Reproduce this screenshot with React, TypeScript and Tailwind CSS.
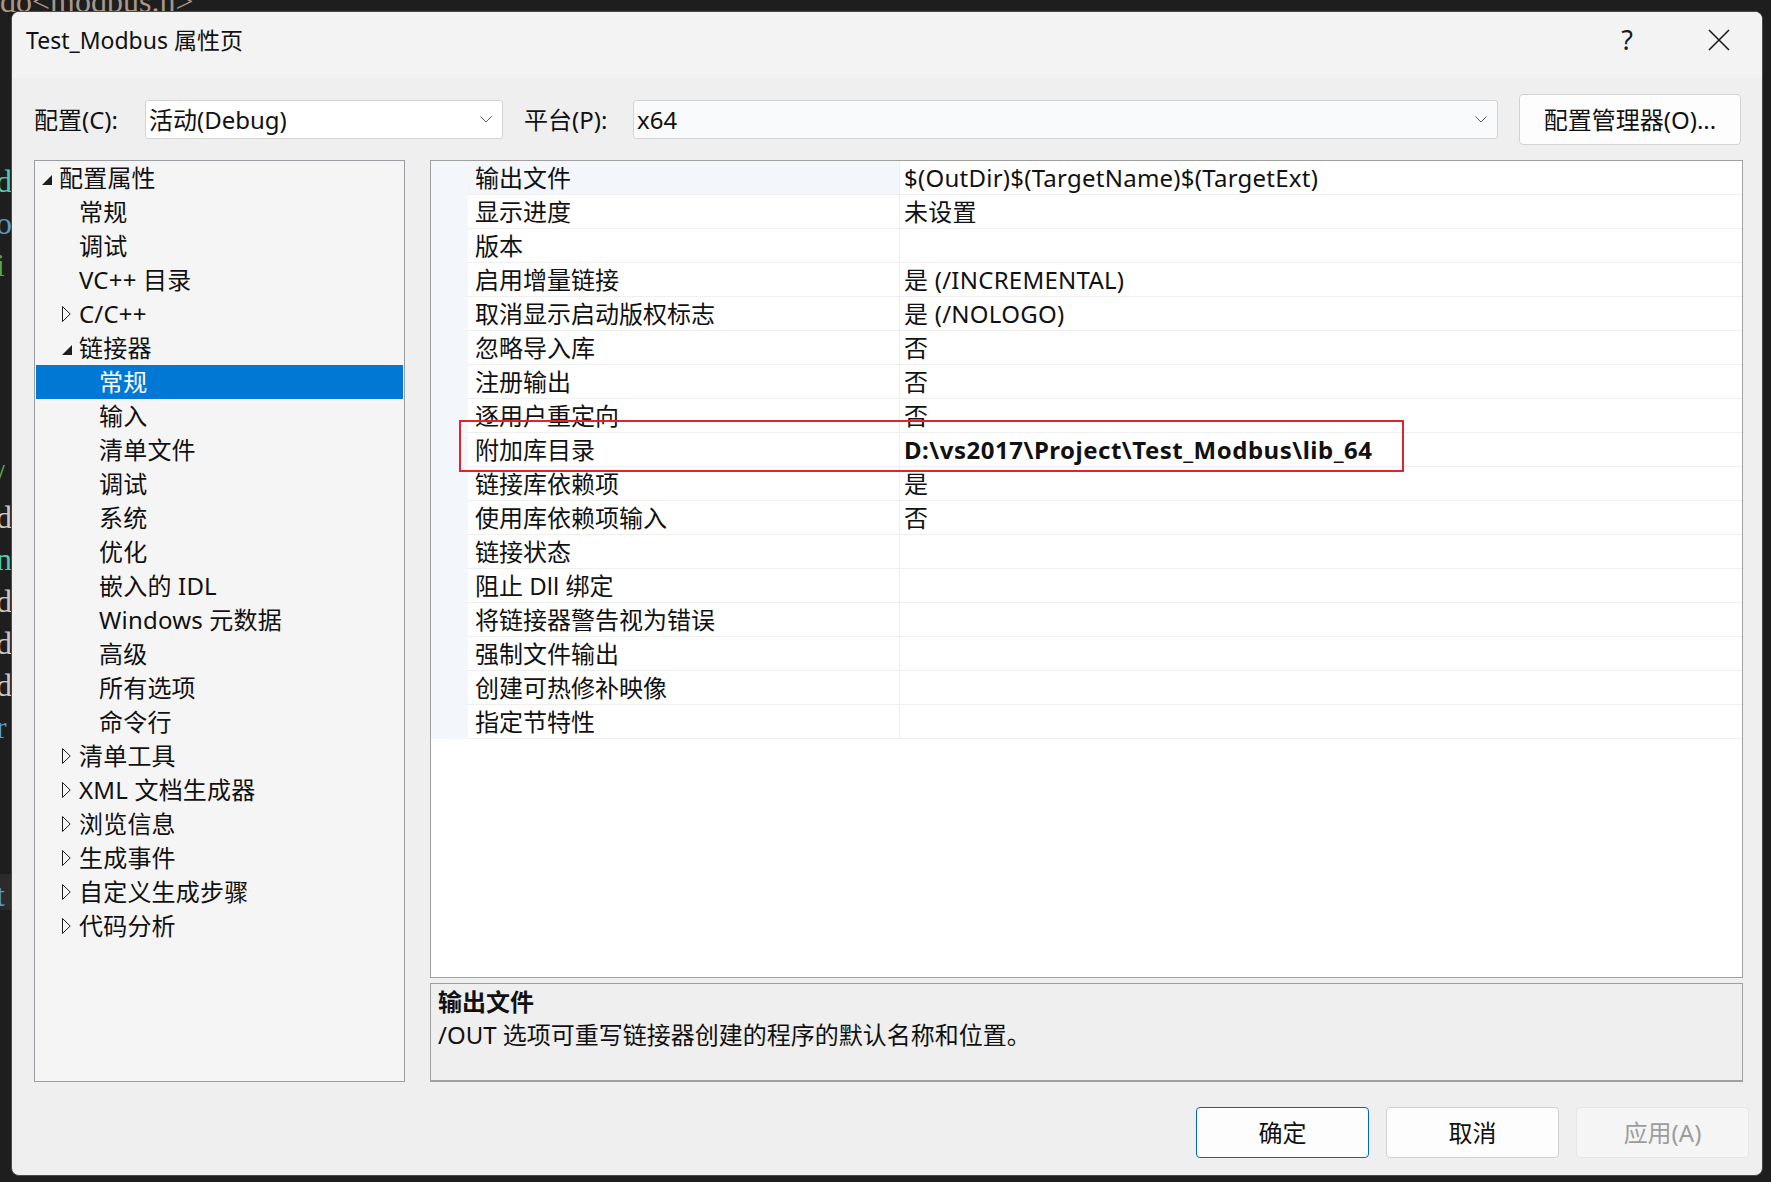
import { ReactNode } from 'react'

const codeChars = [
  { top: 160, ch: 'd', color: 'text-[#4ec9b0]' },
  { top: 202, ch: 'o', color: 'text-[#569cd6]' },
  { top: 244, ch: 'i', color: 'text-[#57a64a]' },
  { top: 454, ch: '/', color: 'text-[#57a64a]' },
  { top: 496, ch: 'd', color: 'text-[#c8c8c8]' },
  { top: 538, ch: 'n', color: 'text-[#4ec9b0]' },
  { top: 580, ch: 'd', color: 'text-[#c8c8c8]' },
  { top: 622, ch: 'd', color: 'text-[#c8c8c8]' },
  { top: 664, ch: 'd', color: 'text-[#c8c8c8]' },
  { top: 706, ch: 'r', color: 'text-[#569cd6]' },
  { top: 874, ch: 't', color: 'text-[#569cd6]' },
]

type TreeItem = { label: string; level: number; state?: 'open' | 'closed'; selected?: boolean }

const treeItems: TreeItem[] = [
  { label: '配置属性', level: 0, state: 'open' },
  { label: '常规', level: 1 },
  { label: '调试', level: 1 },
  { label: 'VC++ 目录', level: 1 },
  { label: 'C/C++', level: 1, state: 'closed' },
  { label: '链接器', level: 1, state: 'open' },
  { label: '常规', level: 2, selected: true },
  { label: '输入', level: 2 },
  { label: '清单文件', level: 2 },
  { label: '调试', level: 2 },
  { label: '系统', level: 2 },
  { label: '优化', level: 2 },
  { label: '嵌入的 IDL', level: 2 },
  { label: 'Windows 元数据', level: 2 },
  { label: '高级', level: 2 },
  { label: '所有选项', level: 2 },
  { label: '命令行', level: 2 },
  { label: '清单工具', level: 1, state: 'closed' },
  { label: 'XML 文档生成器', level: 1, state: 'closed' },
  { label: '浏览信息', level: 1, state: 'closed' },
  { label: '生成事件', level: 1, state: 'closed' },
  { label: '自定义生成步骤', level: 1, state: 'closed' },
  { label: '代码分析', level: 1, state: 'closed' },
]

const props: { name: string; value: string; bold?: boolean }[] = [
  { name: '输出文件', value: '$(OutDir)$(TargetName)$(TargetExt)' },
  { name: '显示进度', value: '未设置' },
  { name: '版本', value: '' },
  { name: '启用增量链接', value: '是 (/INCREMENTAL)' },
  { name: '取消显示启动版权标志', value: '是 (/NOLOGO)' },
  { name: '忽略导入库', value: '否' },
  { name: '注册输出', value: '否' },
  { name: '逐用户重定向', value: '否' },
  { name: '附加库目录', value: 'D:\\vs2017\\Project\\Test_Modbus\\lib_64', bold: true },
  { name: '链接库依赖项', value: '是' },
  { name: '使用库依赖项输入', value: '否' },
  { name: '链接状态', value: '' },
  { name: '阻止 Dll 绑定', value: '' },
  { name: '将链接器警告视为错误', value: '' },
  { name: '强制文件输出', value: '' },
  { name: '创建可热修补映像', value: '' },
  { name: '指定节特性', value: '' },
]

function Chevron() {
  return (
    <svg width="12" height="7" viewBox="0 0 12 7" className="shrink-0">
      <path d="M0.5 0.5 L6 6 L11.5 0.5" fill="none" stroke="#5f5f5f" strokeWidth="1" />
    </svg>
  )
}

function Dropdown({ value, width, bg }: { value: string; width: string; bg: string }) {
  return (
    <div className={`flex items-center justify-between h-[39px] pl-[3px] pr-[10px] border border-[#d3d3d3] rounded-[3px] ${width} ${bg}`}>
      <span>{value}</span>
      <Chevron />
    </div>
  )
}

function Twisty({ state }: { state?: 'open' | 'closed' }) {
  if (state === 'open') {
    return (
      <svg width="10" height="10" viewBox="0 0 10 10" className="mt-[4px]">
        <polygon points="10,0 10,10 0,10" fill="#1e1e1e" />
      </svg>
    )
  }
  if (state === 'closed') {
    return (
      <svg width="9" height="16" viewBox="0 0 9 16">
        <polygon points="0.5,0.5 8.2,8 0.5,15.5" fill="none" stroke="#1e1e1e" strokeWidth="1" />
      </svg>
    )
  }
  return null
}

function Btn({ children, kind }: { children: ReactNode; kind: 'primary' | 'normal' | 'disabled' }) {
  const look =
    kind === 'primary'
      ? 'border-[#0067c0] bg-[#fdfdfd] text-[#111]'
      : kind === 'normal'
        ? 'border-[#d0d0d0] bg-[#fdfdfd] text-[#111]'
        : 'border-[#e6e6e6] bg-[#f5f5f5] text-[#9d9d9d]'
  return (
    <div className={`flex items-center justify-center w-[173px] h-[51px] border rounded-[4px] ${look}`}>
      {children}
    </div>
  )
}

export default function App() {
  return (
    <div className="relative w-[1771px] h-[1182px] overflow-hidden bg-[#1e1e1e] font-['Noto_Sans','Noto_Sans_CJK_SC',sans-serif] text-[24px] text-[#111]">
      {/* code editor behind the dialog */}
      <div className="absolute left-0 top-[-20px] font-['Liberation_Serif',serif] text-[32px] leading-[42px] text-[#a8988a] whitespace-pre">
        {'do<modbus.h>'}
      </div>
      <div className="absolute left-0 top-[874px] w-[14px] h-[36px] bg-[#2b2b2b]" />
      {codeChars.map((c, i) => (
        <div
          key={i}
          className={`absolute left-[-4px] font-['Liberation_Serif',serif] text-[32px] leading-[42px] ${c.color}`}
          style={{ top: c.top }}
        >
          {c.ch}
        </div>
      ))}

      {/* dialog window */}
      <div className="absolute left-[11px] top-[11px] w-[1752px] h-[1165px] flex flex-col overflow-hidden rounded-[8px] border border-[#4a4a4a] bg-[#efefef]">
        {/* title bar */}
        <div className="flex items-center justify-between h-[66px] shrink-0 bg-[#f3f3f3] pl-[14px] pr-[23px] pb-[10px]">
          <span className="text-[23px] leading-[30px]">Test_Modbus 属性页</span>
          <div className="flex items-center gap-[52px]">
            <span className="w-[40px] text-center text-[27px] leading-[30px] text-[#1a1a1a]">?</span>
            <svg width="40" height="22" viewBox="0 0 40 22">
              <path d="M10 1 L30 21 M30 1 L10 21" stroke="#1a1a1a" strokeWidth="1.6" />
            </svg>
          </div>
        </div>

        {/* configuration row */}
        <div className="flex items-center h-[51px] mt-[16px] pl-[22px] leading-[30px]">
          <span className="w-[111px]">配置(C):</span>
          <Dropdown value="活动(Debug)" width="w-[358px]" bg="bg-white" />
          <span className="ml-[21px] w-[109px]">平台(P):</span>
          <Dropdown value="x64" width="w-[865px]" bg="bg-[#f9fafb]" />
          <div className="ml-[21px] flex items-center justify-center w-[222px] h-[51px] border border-[#d3d3d3] rounded-[4px] bg-[#fdfdfd]">
            配置管理器(O)...
          </div>
        </div>

        {/* main area */}
        <div className="flex mt-[15px] pl-[22px] gap-[25px]">
          {/* tree */}
          <div className="w-[371px] h-[922px] border border-[#999ca1] bg-[#f5f5f5]">
            {treeItems.map((t, i) => (
              <div
                key={i}
                className={`flex items-center h-[34px] leading-[34px] ${
                  t.selected ? 'mx-[1px] bg-[#0078d4] text-white' : ''
                }`}
                style={{ paddingLeft: (t.selected ? 4 : 5) + t.level * 20 }}
              >
                <span className="flex items-center w-[19px] pl-[2px]">
                  <Twisty state={t.state} />
                </span>
                <span className="tracking-[0.2px]">{t.label}</span>
              </div>
            ))}
          </div>

          {/* right column */}
          <div className="flex flex-col w-[1313px] gap-[5px]">
            <div className="relative h-[818px] border border-[#a0a0a0] bg-white">
              {props.map((p, i) => (
                <div key={i} className="flex h-[34px] leading-[33px]">
                  <div className="w-[37px] shrink-0 bg-[#f3f6fb]" />
                  <div
                    className={`w-[431px] shrink-0 pl-[7px] border-b border-[#efefef] ${
                      i === 0 ? 'bg-[#f3f6fb]' : ''
                    }`}
                  >
                    {p.name}
                  </div>
                  <div
                    className={`flex-1 pl-[4px] border-l border-b border-[#efefef] ${
                      p.bold ? 'font-bold tracking-[0.5px]' : 'tracking-[0.25px]'
                    }`}
                  >
                    {p.value}
                  </div>
                </div>
              ))}
              <div className="absolute left-[28px] top-[259px] w-[945px] h-[52px] border-2 border-[#e3232b]" />
            </div>

            <div className="h-[99px] border border-[#a0a0a0] border-b-2 bg-[#efefef] pl-[7px] pt-[1px] leading-[33px]">
              <div className="font-bold">输出文件</div>
              <div>/OUT 选项可重写链接器创建的程序的默认名称和位置。</div>
            </div>
          </div>
        </div>

        {/* bottom buttons */}
        <div className="flex justify-end gap-[17px] mt-[25px] pr-[13px]">
          <Btn kind="primary">确定</Btn>
          <Btn kind="normal">取消</Btn>
          <Btn kind="disabled">应用(A)</Btn>
        </div>
      </div>
    </div>
  )
}
